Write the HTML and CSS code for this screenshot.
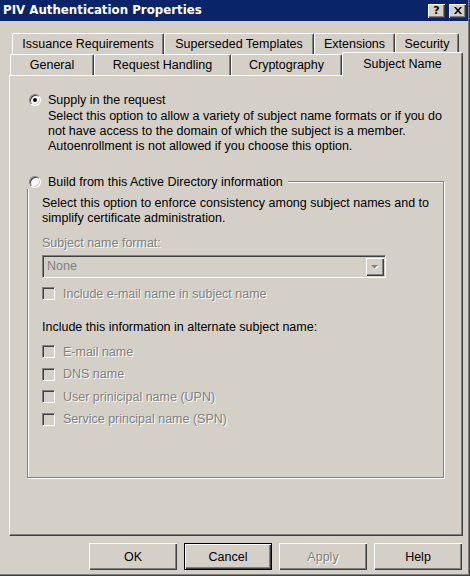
FILE: index.html
```html
<!DOCTYPE html>
<html>
<head>
<meta charset="utf-8">
<title>PIV Authentication Properties</title>
<link rel="stylesheet" href="styles.css">
</head>
<body>
<div class="window">
  <div class="titlebar">
    <span class="title">PIV Authentication Properties</span>
    <div class="cap-btns">
      <span class="cap-btn cap-help">?</span>
      <span class="cap-btn cap-close"><svg width="8" height="7" viewBox="0 0 8 7"><path d="M0 0h2l2 2.5L6 0h2L5 3.5 8 7H6L4 4.5 2 7H0l3-3.5z" fill="#000"/></svg></span>
    </div>
  </div>
  <div class="sheet">
    <div class="tabrow row-back">
      <div class="tab tab-issuance">Issuance Requirements</div>
      <div class="tab tab-superseded">Superseded Templates</div>
      <div class="tab tab-extensions">Extensions</div>
      <div class="tab tab-security">Security</div>
    </div>
    <div class="tabrow row-front">
      <div class="tab tab-general">General</div>
      <div class="tab tab-request">Request Handling</div>
      <div class="tab tab-crypto">Cryptography</div>
      <div class="tab tab-subject selected">Subject Name</div>
    </div>
    <div class="panel">
      <div class="opt opt-supply"><span class="radio checked"></span><span>Supply in the request</span></div>
      <p class="desc">Select this option to allow a variety of subject name formats or if you do<br>not have access to the domain of which the subject is a member.<br>Autoenrollment is not allowed if you choose this option.</p>
      <div class="group">
        <div class="opt group-head"><span class="radio"></span><span>Build from this Active Directory information</span></div>
        <p class="gdesc">Select this option to enforce consistency among subject names and to<br>simplify certificate administration.</p>
        <div class="dim lbl-format">Subject name format:</div>
        <div class="combo">
          <span class="combo-text">None</span>
          <span class="combo-btn"><svg width="8" height="5" viewBox="0 0 8 5"><path d="M1 1h7L4.5 4.5z" fill="#fff"/><path d="M0 0h7L3.5 3.5z" fill="#808080"/></svg></span>
        </div>
        <div class="chk-row chk-include"><span class="chk"></span><span class="dim">Include e-mail name in subject name</span></div>
        <div class="alt-label">Include this information in alternate subject name:</div>
        <div class="chk-row chk-alt first"><span class="chk"></span><span class="dim">E-mail name</span></div>
        <div class="chk-row chk-alt"><span class="chk"></span><span class="dim">DNS name</span></div>
        <div class="chk-row chk-alt"><span class="chk"></span><span class="dim">User prinicipal name (UPN)</span></div>
        <div class="chk-row chk-alt"><span class="chk"></span><span class="dim">Service principal name (SPN)</span></div>
      </div>
    </div>
    <div class="buttons">
      <div class="btn">OK</div>
      <div class="btn default">Cancel</div>
      <div class="btn disabled"><span class="dim">Apply</span></div>
      <div class="btn">Help</div>
    </div>
  </div>
</div>
</body>
</html>
```
FILE: styles.css
```css
* { box-sizing: border-box; }
html, body { margin: 0; padding: 0; background: #d4d0c8; }
body {
  width: 470px;
  height: 576px;
  overflow: hidden;
  font-family: "Liberation Sans", Arial, sans-serif;
  font-size: 12.5px;
  color: #000;
}
.window {
  width: 470px;
  height: 576px;
  background: #d4d0c8;
  box-shadow: inset -1px -1px 0 #404040, inset -2px -2px 0 #808080;
}
.titlebar {
  width: 468px;
  height: 21px;
  background: #0a246a;
  display: flex;
  align-items: center;
  justify-content: space-between;
  padding: 0 2px 0 3px;
}
.title {
  color: #fff;
  font-family: "DejaVu Sans", sans-serif;
  font-weight: bold;
  font-size: 11.8px;
  line-height: 21px;
}
.cap-btns { display: flex; gap: 4px; align-self: flex-start; margin-top: 4px; }
.cap-btn {
  width: 17px;
  height: 14px;
  background: #d4d0c8;
  box-shadow: inset 1px 1px 0 #fff, inset -1px -1px 0 #404040, inset -2px -2px 0 #808080;
  display: flex;
  align-items: center;
  justify-content: center;
  font-family: "DejaVu Sans", sans-serif;
  font-weight: bold;
  font-size: 11px;
  line-height: 14px;
  padding-bottom: 1px;
}
.cap-close svg { display: block; }

.sheet { padding-top: 12px; }
.tabrow { display: flex; align-items: flex-end; height: 21px; }
.row-back { margin-left: 12px; }
.row-front { margin-left: 10px; }
.tab {
  height: 21px;
  background: #d4d0c8;
  border-top: 1px solid #fff;
  border-left: 1px solid #fff;
  border-right: 1px solid #404040;
  border-radius: 2px 2px 0 0;
  box-shadow: inset -1px 0 0 #808080;
  display: flex;
  align-items: center;
  justify-content: center;
  white-space: nowrap;
  padding-bottom: 1px;
}
.tab-issuance { width: 152px; }
.tab-superseded { width: 150px; }
.tab-extensions { width: 81px; }
.tab-security { width: 64px; }
.tab-general { width: 84px; }
.tab-request { width: 137px; }
.tab-crypto { width: 111px; }
.tab-subject { width: 121px; }
.tab.selected {
  height: 24px;
  margin-bottom: -1px;
  position: relative;
  z-index: 1;
  padding-bottom: 2px;
}

.panel {
  margin-left: 9px;
  width: 454px;
  height: 461px;
  border-top: 1px solid #fff;
  border-left: 1px solid #fff;
  border-right: 1px solid #404040;
  border-bottom: 1px solid #404040;
  box-shadow: inset -1px -1px 0 #808080;
  padding-top: 16px;
}
.opt { display: flex; align-items: center; height: 15px; white-space: nowrap; }
.opt-supply { margin-left: 19px; }
.radio {
  flex: none;
  width: 12px;
  height: 12px;
  border-radius: 50%;
  background: #fff;
  border: 1px solid;
  border-color: #808080 #fff #fff #808080;
  box-shadow: inset 1px 1px 0 #404040, inset -1px -1px 0 #d4d0c8;
  margin-right: 7px;
  position: relative;
}
.radio.checked::after {
  content: "";
  position: absolute;
  left: 3px;
  top: 3px;
  width: 4px;
  height: 4px;
  border-radius: 50%;
  background: #000;
}
.desc, .gdesc { margin: 0; line-height: 15px; white-space: nowrap; }
.desc { margin: 2px 0 0 38px; }

.group {
  margin: 27px 0 0 17px;
  width: 417px;
  height: 297px;
  border: 1px solid #808080;
  box-shadow: inset 1px 1px 0 #fff, 1px 1px 0 #fff;
  padding-left: 14px;
}
.group-head {
  width: fit-content;
  margin: -8px 0 0 -15px;
  padding: 0 5px 0 2px;
  background: #d4d0c8;
}
.gdesc { margin-top: 7px; }
.dim { color: #808080; text-shadow: 1px 1px 0 #fff; }
.lbl-format { margin-top: 10px; line-height: 15px; }
.combo {
  margin-top: 4px;
  width: 344px;
  height: 23px;
  background: #d4d0c8;
  border: 1px solid;
  border-color: #808080 #fff #fff #808080;
  box-shadow: inset 1px 1px 0 #404040, inset -1px -1px 0 #d4d0c8;
  display: flex;
  align-items: stretch;
  padding: 1px;
}
.combo-text { flex: 1; color: #808080; padding-left: 3px; line-height: 19px; }
.combo-btn {
  width: 19px;
  background: #d4d0c8;
  box-shadow: inset 1px 1px 0 #d4d0c8, inset 2px 2px 0 #fff, inset -1px -1px 0 #404040, inset -2px -2px 0 #808080;
  display: flex;
  align-items: center;
  justify-content: center;
  padding-top: 1px;
}
.combo-btn svg { display: block; }
.chk-row { display: flex; align-items: center; height: 15px; white-space: nowrap; }
.chk {
  flex: none;
  width: 13px;
  height: 13px;
  background: #d4d0c8;
  border: 1px solid;
  border-color: #808080 #fff #fff #808080;
  box-shadow: inset 1px 1px 0 #404040, inset -1px -1px 0 #d4d0c8;
  margin-right: 8px;
}
.chk-include { margin-top: 8px; }
.alt-label { margin-top: 19px; line-height: 15px; }
.chk-alt { margin-top: 7.5px; }
.chk-alt.first { margin-top: 9px; }

.buttons {
  display: flex;
  justify-content: flex-end;
  gap: 7px;
  padding-right: 8px;
  margin-top: 7px;
}
.btn {
  width: 88px;
  height: 27px;
  background: #d4d0c8;
  box-shadow: inset 1px 1px 0 #fff, inset -1px -1px 0 #404040, inset -2px -2px 0 #808080;
  display: flex;
  align-items: center;
  justify-content: center;
}
.btn.default {
  border: 1px solid #000;
  box-shadow: inset 1px 1px 0 #fff, inset -1px -1px 0 #404040, inset -2px -2px 0 #808080;
}
```
